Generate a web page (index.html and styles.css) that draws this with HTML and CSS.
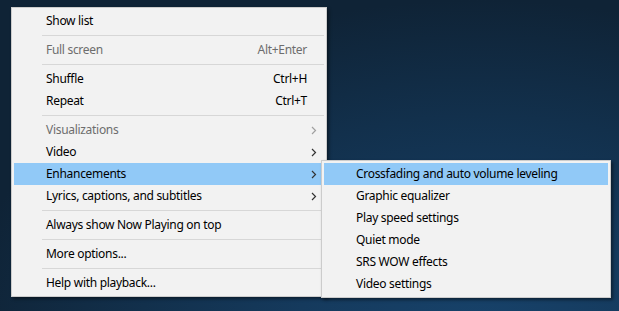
FILE: index.html
```html
<!DOCTYPE html>
<html>
<head>
<meta charset="utf-8">
<link rel="stylesheet" href="styles.css">
</head>
<body>
<div class="desktop">
  <div class="menu main">
    <div class="item">Show list</div>
    <div class="sep"></div>
    <div class="item disabled"><span class="label">Full screen</span><span class="key">Alt+Enter</span></div>
    <div class="sep"></div>
    <div class="item"><span class="label">Shuffle</span><span class="key">Ctrl+H</span></div>
    <div class="item"><span class="label">Repeat</span><span class="key">Ctrl+T</span></div>
    <div class="sep"></div>
    <div class="item disabled sub"><span class="label">Visualizations</span><svg class="chev" width="6" height="9" viewBox="0 0 6 9"><polyline points="1,1 4.5,4.5 1,8"/></svg></div>
    <div class="item sub"><span class="label">Video</span><svg class="chev" width="6" height="9" viewBox="0 0 6 9"><polyline points="1,1 4.5,4.5 1,8"/></svg></div>
    <div class="item sub active"><span class="label">Enhancements</span><svg class="chev" width="6" height="9" viewBox="0 0 6 9"><polyline points="1,1 4.5,4.5 1,8"/></svg>
      <div class="menu submenu">
        <div class="item active">Crossfading and auto volume leveling</div>
        <div class="item">Graphic equalizer</div>
        <div class="item">Play speed settings</div>
        <div class="item">Quiet mode</div>
        <div class="item">SRS WOW effects</div>
        <div class="item">Video settings</div>
      </div>
    </div>
    <div class="item sub"><span class="label">Lyrics, captions, and subtitles</span><svg class="chev" width="6" height="9" viewBox="0 0 6 9"><polyline points="1,1 4.5,4.5 1,8"/></svg></div>
    <div class="sep"></div>
    <div class="item">Always show Now Playing on top</div>
    <div class="sep"></div>
    <div class="item">More options...</div>
    <div class="sep"></div>
    <div class="item">Help with playback...</div>
  </div>
</div>
</body>
</html>
```
FILE: styles.css
```css
html, body {
  margin: 0;
  padding: 0;
}
body {
  width: 619px;
  height: 311px;
  overflow: hidden;
}
.desktop {
  width: 619px;
  height: 311px;
  padding: 7px 0 0 11px;
  box-sizing: border-box;
  background:
    radial-gradient(ellipse 520px 330px at 480px 330px, #17426a 0%, #153a5d 35%, #12304c 65%, #0f2336 100%),
    #0f1e2b;
  font-family: "Noto Sans", "Open Sans", sans-serif;
  font-size: 12px;
  letter-spacing: -0.3px;
  color: #000;
}
.menu {
  background: #f2f2f2;
  border: 1px solid #cccccc;
  padding: 2px;
  box-shadow: 2px 2px 3px rgba(0, 0, 0, 0.45);
  box-sizing: border-box;
}
.main {
  width: 316px;
}
.item {
  position: relative;
  height: 22px;
  display: flex;
  align-items: center;
  padding: 0 17px 0 32px;
  white-space: nowrap;
  line-height: 22px;
}
.item .label {
  flex: 1;
}
.item .key {
  text-align: right;
}
.item.disabled {
  color: #6d6d6d;
}
.item.sub {
  padding-right: 7px;
}
.chev {
  display: block;
  fill: none;
  stroke: #333;
  stroke-width: 1.2;
}
.disabled .chev {
  stroke: #a0a0a0;
}
.item.active {
  background: #91c9f7;
}
.sep {
  height: 1px;
  background: #d7d7d7;
  margin: 3px 0 3px 28px;
}
.submenu {
  position: absolute;
  top: -3px;
  left: calc(100% - 3px);
  width: 290px;
  z-index: 2;
}
```
